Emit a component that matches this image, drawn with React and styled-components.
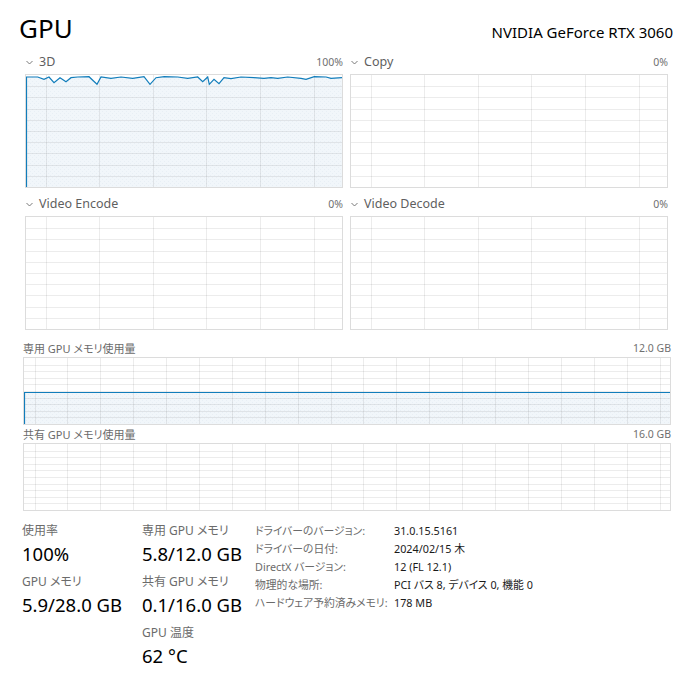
import React, { useId } from "react"
import styled, { createGlobalStyle } from "styled-components"

const LINE = "#117dbb"
const FILL = "#f1f6fa"
const GRID = "rgba(0, 0, 0, 0.075)"

const GlobalStyle = createGlobalStyle`
  html, body {
    margin: 0;
    background: #fff;
  }
  body {
    font-family: "Noto Sans", "Noto Sans CJK JP", sans-serif;
    font-feature-settings: "palt";
    color: #000;
  }
`

// 3D engine load, pixel coords inside the chart (x, y from top)
const load3d = [
  [0, 2], [11.7, 2], [18, 4.3], [23, 2], [28, 7.7], [34, 2.7], [40, 6.7],
  [45, 2.7], [51.7, 2], [63, 1.7], [71, 9.3], [75, 2], [85, 3.3], [95, 2],
  [106.7, 3.3], [118, 1.7], [124, 9.3], [130, 2.7], [138.3, 1.7],
  [151.7, 2], [161.7, 3.3], [171.7, 2], [176.7, 6.7], [181.7, 2],
  [183.3, 9.3], [188, 4.3], [193, 8.7], [198, 2.7], [205, 3.7], [215, 2],
  [228, 2.7], [238, 3.3], [245, 2.7], [251.7, 3.3], [261.7, 2], [275, 3.3],
  [280, 4.3], [288.3, 1.7], [300, 2], [305, 3.3], [316, 2.7],
]

const Graph = ({ width, height, rows, colStart, colStep, points, level }) => {
  const id = useId().replace(/:/g, "")
  const hLines = Array.from({ length: rows - 1 }, (_, i) =>
    Math.round(((i + 1) * height) / rows) + 0.5
  )
  const vLines = []
  for (let x = colStart; x < width; x += colStep) vLines.push(Math.round(x) + 0.5)

  let data = points
  if (level != null) {
    const y = Math.round(height * (1 - level)) + 0.5
    data = [[0, y], [width, y]]
  }
  const area = data
    ? [[0, height], ...data, [width, height]].map(p => p.join(",")).join(" ")
    : null
  const outline = data
    ? [[0.5, height], [0.5, data[0][1]], ...data].map(p => p.join(",")).join(" ")
    : null

  return (
    <svg width={width} height={height} viewBox={`0 0 ${width} ${height}`}>
      <defs>
        <pattern id={id} width="4" height="4" patternUnits="userSpaceOnUse">
          <rect width="1" height="1" fill="#dfe8f0" />
          <rect x="2" y="2" width="1" height="1" fill="#dfe8f0" />
        </pattern>
      </defs>
      {area && <polygon points={area} fill={FILL} />}
      {area && <polygon points={area} fill={`url(#${id})`} opacity="0.5" />}
      {hLines.map(y => (
        <line key={`h${y}`} x1="0" x2={width} y1={y} y2={y} stroke={GRID} />
      ))}
      {vLines.map(x => (
        <line key={`v${x}`} x1={x} x2={x} y1="0" y2={height} stroke={GRID} />
      ))}
      {outline && (
        <polyline points={outline} fill="none" stroke={LINE} strokeWidth="1.2" />
      )}
    </svg>
  )
}

const Chevron = () => (
  <svg width="7" height="5" viewBox="0 0 7 5">
    <path d="M0.5 1 L3.5 4 L6.5 1" fill="none" stroke="#6b6b6b" strokeWidth="0.9" />
  </svg>
)

const engines = [
  { name: "3D", value: "100%", points: load3d },
  { name: "Copy", value: "0%" },
  { name: "Video Encode", value: "0%" },
  { name: "Video Decode", value: "0%" },
]

const details = [
  ["ドライバーのバージョン:", "31.0.15.5161"],
  ["ドライバーの日付:", "2024/02/15 木"],
  ["DirectX バージョン:", "12 (FL 12.1)"],
  ["物理的な場所:", "PCI バス 8, デバイス 0, 機能 0"],
  ["ハードウェア予約済みメモリ:", "178 MB"],
]

const App = () => (
  <>
    <GlobalStyle />
    <Page>
      <Header>
        <Title>GPU</Title>
        <Adapter>NVIDIA GeForce RTX 3060</Adapter>
      </Header>

      <EngineGrid>
        {engines.map(e => (
          <div key={e.name}>
            <EngineHead>
              <Chevron />
              <EngineName>{e.name}</EngineName>
              <Small>{e.value}</Small>
            </EngineHead>
            <ChartBox>
              <Graph
                width={316}
                height={112}
                rows={10}
                colStart={19.5}
                colStep={53.6}
                points={e.points}
              />
            </ChartBox>
          </div>
        ))}
      </EngineGrid>

      <MemHead first>
        <span>専用 GPU メモリ使用量</span>
        <Small>12.0 GB</Small>
      </MemHead>
      <ChartBox>
        <Graph width={646} height={66} rows={10} colStart={10.5} colStep={32.9} level={5.8 / 12} />
      </ChartBox>
      <MemHead>
        <span>共有 GPU メモリ使用量</span>
        <Small>16.0 GB</Small>
      </MemHead>
      <ChartBox>
        <Graph width={646} height={66} rows={10} colStart={10.5} colStep={32.9} />
      </ChartBox>

      <Stats>
        <StatCol>
          <StatLabel>使用率</StatLabel>
          <StatValue>100%</StatValue>
          <StatLabel>GPU メモリ</StatLabel>
          <StatValue>5.9/28.0 GB</StatValue>
        </StatCol>
        <StatCol>
          <StatLabel>専用 GPU メモリ</StatLabel>
          <StatValue>5.8/12.0 GB</StatValue>
          <StatLabel>共有 GPU メモリ</StatLabel>
          <StatValue>0.1/16.0 GB</StatValue>
          <StatLabel>GPU 温度</StatLabel>
          <StatValue>62 °C</StatValue>
        </StatCol>
        <Details>
          {details.map(([k, v]) => (
            <React.Fragment key={k}>
              <DetailLabel>{k}</DetailLabel>
              <DetailValue>{v}</DetailValue>
            </React.Fragment>
          ))}
        </Details>
      </Stats>
    </Page>
  </>
)

const Page = styled.div`
  width: 648px;
  padding: 11px 0 0 23px;
`

const Header = styled.header`
  display: flex;
  justify-content: space-between;
  align-items: baseline;
  margin: 0 -2px 9px -4px;
`

const Title = styled.h1`
  margin: 0;
  font-size: 26px;
  line-height: 34px;
  font-weight: 400;
  color: #000;
`

const Adapter = styled.div`
  font-size: 15px;
  color: #000;
`

const EngineGrid = styled.div`
  display: grid;
  grid-template-columns: 318px 318px;
  column-gap: 7px;
  row-gap: 8px;
  margin: 0 2px;
`

const EngineHead = styled.div`
  display: flex;
  align-items: center;
  height: 20px;
  padding: 0 0 4px 1px;
  box-sizing: border-box;
  gap: 6px;
`

const EngineName = styled.span`
  flex: 1;
  font-size: 12.5px;
  line-height: 16px;
  color: #5f5f5f;
`

const Small = styled.span`
  font-size: 10.5px;
  line-height: 16px;
  color: #707070;
`

const ChartBox = styled.div`
  border: 1px solid #dcdcdc;
  line-height: 0;
  background: #fff;
`

const MemHead = styled.div`
  display: flex;
  justify-content: space-between;
  align-items: center;
  height: 18px;
  margin-top: ${p => (p.first ? "9px" : "0")};
  font-size: 11px;
  color: #6b6b6b;
`

const Stats = styled.div`
  display: grid;
  grid-template-columns: 120px 113px auto;
  margin: 11px 0 0 -1px;
`

const StatCol = styled.div`
  display: flex;
  flex-direction: column;
`

const StatLabel = styled.div`
  font-size: 12px;
  line-height: 18px;
  color: #6b6b6b;
`

const StatValue = styled.div`
  font-size: 18.5px;
  line-height: 28px;
  margin-bottom: 5px;
  color: #000;
`

const Details = styled.div`
  display: grid;
  grid-template-columns: 139px auto;
  grid-auto-rows: 18px;
  align-content: start;
  padding-top: 0;
  font-size: 10.8px;
  line-height: 18px;
`

const DetailLabel = styled.div`
  color: #6b6b6b;
  white-space: nowrap;
`

const DetailValue = styled.div`
  color: #1a1a1a;
  white-space: nowrap;
`

export default App
